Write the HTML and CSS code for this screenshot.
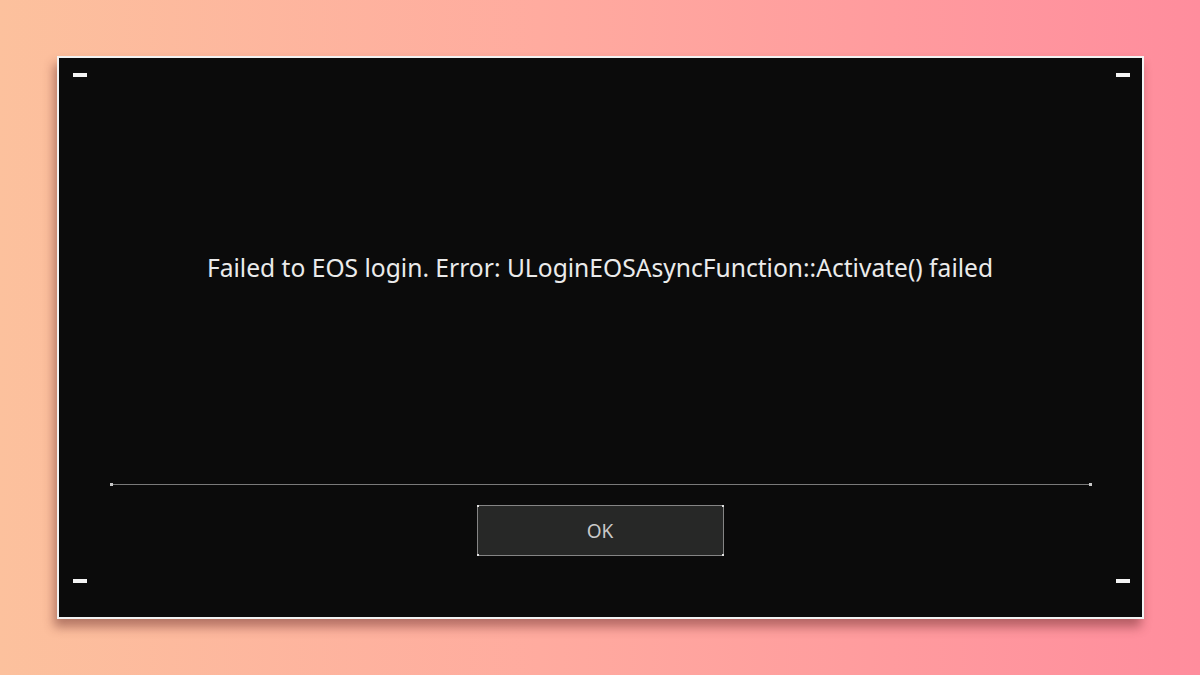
FILE: index.html
```html
<html>

<head>
	<title>EOS Login Error</title>
	<link rel="stylesheet" href="styles.css">
</head>

<body>
	<div class="dialog">
		<span class="mark top left"></span>
		<span class="mark top right"></span>
		<span class="mark bottom left"></span>
		<span class="mark bottom right"></span>

		<div class="message">Failed to EOS login. Error: ULoginEOSAsyncFunction::Activate() failed</div>

		<div class="divider"></div>

		<div class="buttons">
			<div class="okbutton">OK</div>
		</div>
	</div>
</body>
</html>
```

FILE: styles.css
```css
body {
	margin: 0;
	padding-top: 56px;
	height: 675px;
	box-sizing: border-box;
	background: linear-gradient(90deg, #fcc19d 0%, #ffab9f 45%, #ff8d9d 100%);
	font-family: "Noto Sans", "Open Sans", sans-serif;
	overflow: hidden;
}

.dialog {
	position: relative;
	width: 1083px;
	height: 559px;
	margin: 0 auto;
	border: 2px solid #f2f2f2;
	background-color: #0b0b0b;
	box-shadow: -3px 8px 10px rgba(90, 30, 30, 0.45);
}

/* little white dashes in each corner */
.mark {
	position: absolute;
	width: 14px;
	height: 4px;
	background-color: #f4f4f4;
}
.mark.top { top: 15px; }
.mark.bottom { bottom: 34px; }
.mark.left { left: 14px; }
.mark.right { right: 12px; }

.message {
	margin-top: 195px;
	line-height: 30px;
	font-size: 24.6px;
	color: #ebebeb;
	text-align: center;
}

.divider {
	position: relative;
	height: 1px;
	margin: 201px 51px 0 52px;
	background-color: #7a7a7a;
}

.divider:before, .divider:after {
	content: "";
	position: absolute;
	top: -1px;
	width: 3px;
	height: 3px;
	background-color: #c8c8c8;
}
.divider:before { left: -1px; }
.divider:after { right: -1px; }

.buttons {
	display: flex;
	justify-content: center;
	padding-top: 20px;
}

.okbutton {
	position: relative;
	width: 245px;
	height: 49px;
	line-height: 50px;
	border: 1px solid #858585;
	background-color: #272827;
	color: #c9c9c9;
	font-size: 19px;
	text-align: center;
}

/* brighter dots on the button corners */
.okbutton:before {
	content: "";
	position: absolute;
	top: -1px;
	left: -1px;
	width: 2px;
	height: 2px;
	background-color: #e0e0e0;
	box-shadow: 245px 0 #e0e0e0, 0 49px #e0e0e0, 245px 49px #e0e0e0;
}
```
